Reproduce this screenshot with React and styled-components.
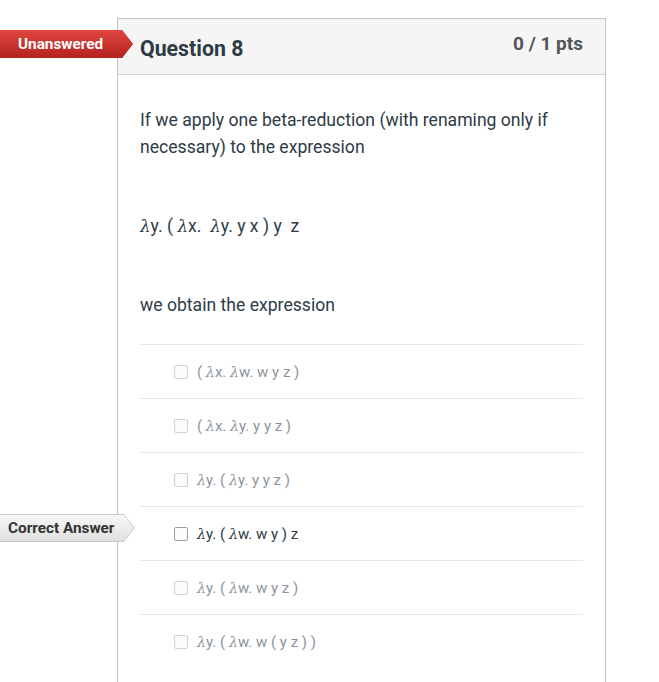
import React from "react";
import styled, { createGlobalStyle } from "styled-components";

const Global = createGlobalStyle`
  html, body { margin: 0; padding: 0; background: #fff; }
  body { font-family: Roboto, "Liberation Sans", Arial, sans-serif; color: #2d3b45; }
`;

const Page = styled.div`
  position: relative;
  padding: 18px 0 0 117px;
  height: 664px;
  overflow: hidden;
`;

const Card = styled.div`
  width: 487px;
  border: 1px solid #c4c4c4;
  border-bottom: none;
  min-height: 700px;
`;

const Header = styled.div`
  display: flex;
  justify-content: space-between;
  align-items: flex-start;
  height: 55px;
  padding: 0 22px;
  background: #f5f5f5;
  border-bottom: 1px solid #d6d6d6;
`;

const Title = styled.h2`
  margin: 17px 0 0;
  font-size: 21.3px;
  font-weight: 700;
  line-height: 26px;
  color: #2d3b45;
`;

const Points = styled.div`
  margin-top: 14px;
  font-size: 19px;
  font-weight: 700;
  line-height: 22px;
  color: #4f5559;
`;

const Body = styled.div`
  padding: 32px 22px 0;
`;

const Para = styled.p`
  margin: 0 0 ${(p) => p.$mb || 0}px;
  font-size: 17.6px;
  line-height: 27px;
  color: #2d3b45;
`;

const Lam = styled.span`
  font-style: italic;
  font-family: "DejaVu Serif", "Liberation Serif", serif;
  font-size: 0.95em;
`;

const Answers = styled.div`
  margin-top: 25px;
`;

const Row = styled.div`
  position: relative;
  display: flex;
  align-items: center;
  height: 53px;
  padding-left: 34px;
  border-top: 1px solid #e8e8e8;
  font-size: 15px;
  color: ${(p) => (p.$correct ? "#2d3b45" : "#8d959b")};
`;

const Box = styled.span`
  box-sizing: border-box;
  width: 14px;
  height: 14px;
  margin-right: 9px;
  border: 1px solid ${(p) => (p.$correct ? "#9aa0a5" : "#cfd3d6")};
  border-radius: 2px;
  background: #fbfbfb;
  flex: none;
`;

const Flag = styled.div`
  position: absolute;
  left: 0;
  top: ${(p) => p.$top}px;
  width: ${(p) => p.$w}px;
  height: 28px;
  clip-path: polygon(0 0, calc(100% - 11px) 0, 100% 50%, calc(100% - 11px) 100%, 0 100%);
  background: ${(p) => (p.$red ? "linear-gradient(#e0453f, #b3231e)" : "#c9c9c9")};
`;

const FlagInner = styled.div`
  position: absolute;
  inset: ${(p) => (p.$red ? 0 : 1)}px;
  left: 0;
  display: flex;
  align-items: center;
  padding-left: ${(p) => p.$pl}px;
  clip-path: polygon(0 0, calc(100% - 10px) 0, 100% 50%, calc(100% - 10px) 100%, 0 100%);
  background: ${(p) => (p.$red ? "linear-gradient(#e0453f, #b3231e)" : "linear-gradient(#f7f7f7, #e0e0e0)")};
  color: ${(p) => (p.$red ? "#fff" : "#333")};
  font-size: 15.3px;
  font-weight: 700;
`;

const L = () => <Lam>λ</Lam>;

const answers = [
  { c: false, t: <>( <L />x. <L />w. w y z )</> },
  { c: false, t: <>( <L />x. <L />y. y y z )</> },
  { c: false, t: <><L />y. ( <L />y. y y z )</> },
  { c: true, t: <><L />y. ( <L />w. w y ) z</> },
  { c: false, t: <><L />y. ( <L />w. w y z )</> },
  { c: false, t: <><L />y. ( <L />w. w ( y z ) )</> },
];

export default function App() {
  return (
    <>
      <Global />
      <Page>
        <Flag $red $top={30} $w={133}>
          <FlagInner $red $pl={18}>Unanswered</FlagInner>
        </Flag>
        <Card>
          <Header>
            <Title>Question 8</Title>
            <Points>0 / 1 pts</Points>
          </Header>
          <Body>
            <Para $mb={52}>
              If we apply one beta-reduction (with renaming only if necessary) to the expression
            </Para>
            <Para $mb={52}>
              <L />y. ( <L />x.&nbsp; <L />y. y x ) y&nbsp; z
            </Para>
            <Para>we obtain the expression</Para>
            <Answers>
              {answers.map((a, i) => (
                <Row key={i} $correct={a.c}>
                  {a.c && (
                    <Flag $top={7} $w={135} style={{ left: -140 }}>
                      <FlagInner $pl={8}>Correct Answer</FlagInner>
                    </Flag>
                  )}
                  <Box $correct={a.c} />
                  <span>{a.t}</span>
                </Row>
              ))}
            </Answers>
          </Body>
        </Card>
      </Page>
    </>
  );
}
